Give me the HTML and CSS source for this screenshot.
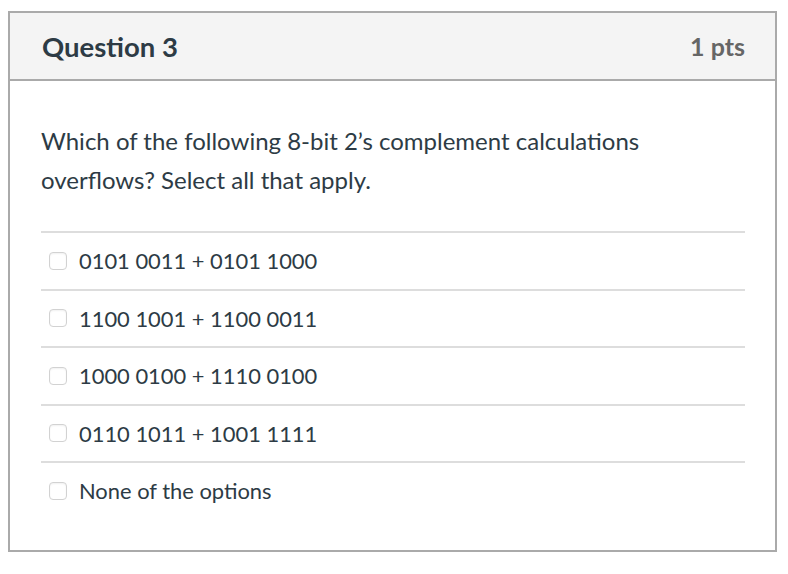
FILE: index.html
```html
<!DOCTYPE html>
<html>
<head>
<meta charset="utf-8">
<link rel="stylesheet" href="styles.css">
</head>
<body>
<div class="card">
  <div class="card-header">
    <h2 class="title">Question 3</h2>
    <span class="pts">1 pts</span>
  </div>
  <div class="card-body">
    <p class="question">Which of the following 8-bit 2’s complement calculations overflows? Select all that apply.</p>
    <ul class="answers">
      <li class="answer"><span class="box"></span><span class="label">0101 0011 + 0101 1000</span></li>
      <li class="answer"><span class="box"></span><span class="label">1100 1001 + 1100 0011</span></li>
      <li class="answer"><span class="box"></span><span class="label">1000 0100 + 1110 0100</span></li>
      <li class="answer"><span class="box"></span><span class="label">0110 1011 + 1001 1111</span></li>
      <li class="answer"><span class="box"></span><span class="label">None of the options</span></li>
    </ul>
  </div>
</div>
</body>
</html>
```

FILE: styles.css
```css
html, body {
  margin: 0;
  padding: 0;
  background: #ffffff;
}
body {
  padding: 11px 0 0 8px;
  font-family: Lato, "Open Sans", "Liberation Sans", sans-serif;
  color: #2d3b45;
}
.card {
  width: 769px;
  height: 541px;
  box-sizing: border-box;
  border: 2px solid #aaaaaa;
  display: flex;
  flex-direction: column;
}
.card-header {
  height: 68px;
  box-sizing: border-box;
  background: #f4f4f4;
  border-bottom: 2px solid #aaaaaa;
  display: flex;
  align-items: center;
  justify-content: space-between;
  padding: 0 30px 0 32px;
}
.title {
  margin: 0;
  font-size: 27.5px;
  font-weight: 700;
  color: #2d3b45;
}
.pts {
  font-size: 25px;
  font-weight: 700;
  color: #666666;
}
.card-body {
  padding: 0 30px 0 31px;
}
.question {
  margin: 40px 0 0 0;
  max-width: 640px;
  font-size: 24px;
  line-height: 39px;
  color: #2d3b45;
}
.answers {
  list-style: none;
  margin: 32px 0 0 0;
  padding: 0;
}
.answer {
  border-top: 2px solid #dddddd;
  height: 55.5px;
  display: flex;
  align-items: center;
  padding-left: 8px;
  font-size: 21.9px;
  color: #2d3b45;
}
.box {
  width: 16px;
  height: 16px;
  border: 1px solid #d2d2d2;
  border-radius: 4px;
  background: #fff;
  box-shadow: inset 0 1px 2px rgba(0,0,0,0.06);
  flex: none;
  margin-right: 12px;
}
```
